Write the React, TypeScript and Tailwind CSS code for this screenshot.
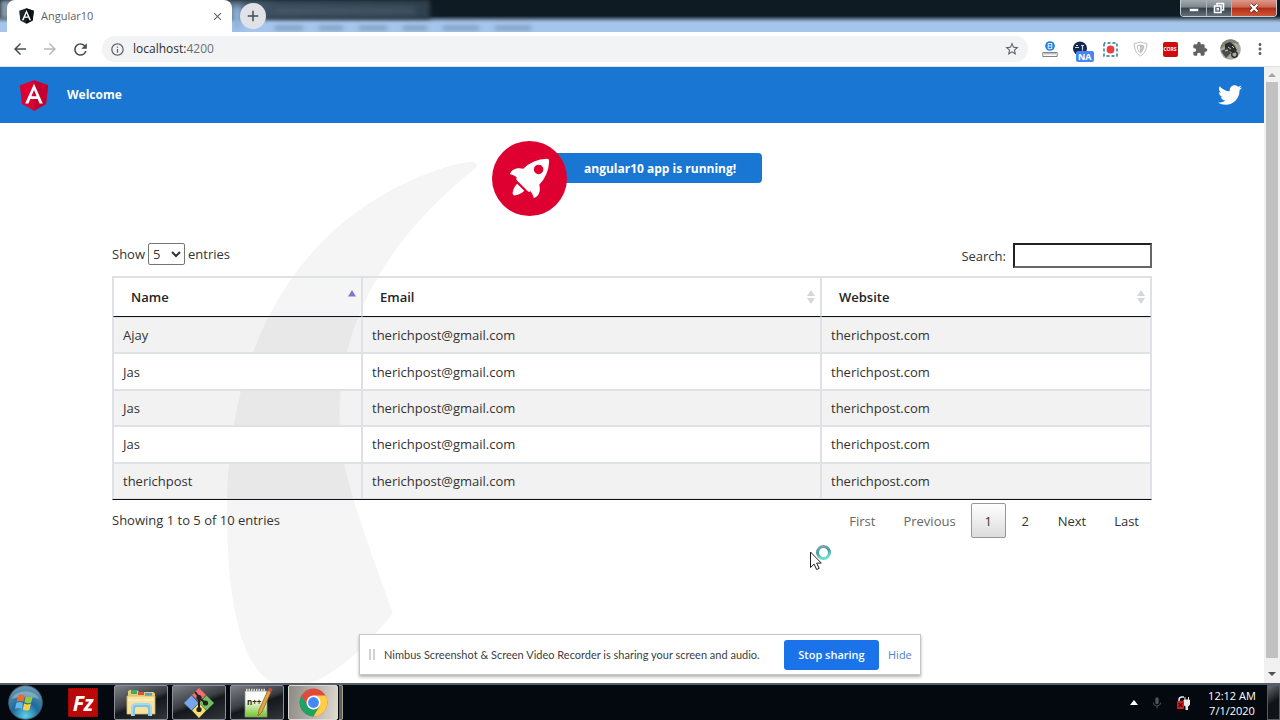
import React, { useState } from "react";
import { FaTwitter } from "react-icons/fa";
import {
  MdAdd,
  MdArrowBack,
  MdArrowForward,
  MdClose,
  MdExtension,
  MdInfoOutline,
  MdMic,
  MdMoreVert,
  MdRefresh,
  MdStarBorder,
} from "react-icons/md";

const rows = [
  { id: 1, name: "Ajay", email: "therichpost@gmail.com", website: "therichpost.com" },
  { id: 2, name: "Jas", email: "therichpost@gmail.com", website: "therichpost.com" },
  { id: 3, name: "Jas", email: "therichpost@gmail.com", website: "therichpost.com" },
  { id: 4, name: "Jas", email: "therichpost@gmail.com", website: "therichpost.com" },
  { id: 5, name: "therichpost", email: "therichpost@gmail.com", website: "therichpost.com" },
];

function AngularLogo({ className, dark }: { className: string; dark?: boolean }) {
  return (
    <svg viewBox="30 28 190 204" className={className} aria-hidden="true">
      <polygon fill={dark ? "#1a2429" : "#dd0031"} points="125,30 31.9,63.2 46.1,186.3 125,230 203.9,186.3 218.1,63.2" />
      <polygon fill={dark ? "#0a1013" : "#c3002f"} points="125,30 125,230 203.9,186.3 218.1,63.2" />
      <path
        fill="#fff"
        d="M125,52.1L66.8,182.6h21.7l11.7-29.2h49.4l11.7,29.2H183L125,52.1z M142,135.4H108l17-40.9L142,135.4z"
      />
    </svg>
  );
}

function TitleBar() {
  return (
    <div className="relative flex h-8 shrink-0 justify-between overflow-hidden bg-[linear-gradient(to_bottom,#0e1920_0,#101c25_16px,#8fabca_21px,#a5c5ea_23px,#a5c5ea_100%)]">
      {/* blurred window behind the glass frame */}
      <div className="absolute left-0 top-0 h-[19px] w-[430px] bg-[linear-gradient(to_right,#8499a8,#5d7184_50%,#384a59_65%,#2f404e)] blur-[2px]" />
      <div className="absolute left-[232px] top-[6px] h-[24px] w-[10px] bg-[#8fb5dd] blur-[3px]" />
      <div className="absolute left-[275px] top-[8px] h-[6px] w-[140px] bg-[#53677a]/60 blur-[3px]" />
      <div className="absolute left-[275px] top-[26px] flex gap-4 blur-[2px]">
        <div className="h-1 w-7 bg-[#7f9cbd]" />
        <div className="h-1 w-6 bg-[#7f9cbd]" />
        <div className="h-1 w-7 bg-[#7f9cbd]" />
        <div className="h-1 w-6 bg-[#7f9cbd]" />
        <div className="h-1 w-9 bg-[#7f9cbd]" />
        <div className="h-1 w-9 bg-[#7f9cbd]" />
      </div>

      <div className="relative flex items-center">
        <div className="ml-[7px] flex h-8 w-[225px] items-center rounded-t-lg bg-white pl-[12px] pr-[8px]">
          <AngularLogo dark className="h-[16px] w-[15px]" />
          <span className="ml-[7px] flex-1 text-[11px] leading-4 text-[#5f6368]">Angular10</span>
          <button aria-label="Close tab" className="text-[#5f6368]">
            <MdClose size={13} />
          </button>
        </div>
        <button aria-label="New tab" className="ml-[8px] grid size-[26px] place-items-center rounded-full bg-[#dfe3e7] text-[#45494d]">
          <MdAdd size={18} />
        </button>
      </div>

      <div className="relative mr-[3px] flex h-[17px] overflow-hidden rounded-b border border-t-0 border-[#c3ccd3] text-white">
        <button aria-label="Minimize" className="grid w-[26px] place-items-center border-r border-[#aab4bc] bg-[linear-gradient(to_bottom,#a3abb1,#7b858c_45%,#333e47_50%,#65717a)]">
          <svg width="12" height="12" viewBox="0 0 12 12">
            <rect x="1.5" y="6.5" width="9" height="3" fill="#fff" stroke="#4b555d" strokeWidth=".6" />
          </svg>
        </button>
        <button aria-label="Restore" className="grid w-[25px] place-items-center border-r border-[#aab4bc] bg-[linear-gradient(to_bottom,#a3abb1,#7b858c_45%,#333e47_50%,#65717a)]">
          <svg width="12" height="12" viewBox="0 0 12 12" fill="none" stroke="#fff" strokeWidth="1.6">
            <path d="M4 3V1.5h6.5V8H9" />
            <rect x="1.5" y="4" width="6.5" height="6.5" />
            <rect x="4" y="6.4" width="1.6" height="1.6" strokeWidth="1" />
          </svg>
        </button>
        <button aria-label="Close window" className="grid w-[44px] place-items-center bg-[linear-gradient(to_bottom,#dc9a8b,#cc6753_45%,#b02d14_50%,#cf5637)]">
          <svg width="12" height="12" viewBox="0 0 12 12">
            <path d="M2.5 2.5l7 7M9.5 2.5l-7 7" stroke="#5a2018" strokeWidth="3.6" />
            <path d="M2.5 2.5l7 7M9.5 2.5l-7 7" stroke="#fff" strokeWidth="2.3" />
          </svg>
        </button>
      </div>
    </div>
  );
}

function Extensions() {
  return (
    <div className="flex items-center text-[#5f6368]">
      <button aria-label="Ruler extension" className="grid w-[30px] place-items-center">
        <svg width="16" height="17" viewBox="0 0 16 17">
          <circle cx="8" cy="5" r="4.8" fill="#1f7fe0" />
          <path d="M6.200 2.500h3.600v5.200H6.200zM6.200 5h3.600" fill="none" stroke="#fff" strokeWidth=".9" />
          <path d="M.8 11.500v4h14.400v-4zM3 11.500v2M5 11.500v2M7 11.500v2M9 11.500v2M11 11.500v2M13 11.500v2" fill="none" stroke="#70767b" strokeWidth=".9" />
        </svg>
      </button>
      <button aria-label="Rank extension" className="relative grid w-[30px] place-items-center">
        <svg width="16" height="17" viewBox="0 0 16 17">
          <circle cx="8" cy="7.500" r="7" fill="#16294d" />
          <path d="M3 6.500h4M4 4.500h2M9 4.500h3M10.500 4.500v5" stroke="#c9d6ec" strokeWidth="1.200" />
        </svg>
        <span className="absolute left-[11px] top-[10px] rounded-[2px] bg-[#4688f1] px-[2px] text-[9px] font-bold leading-[11px] text-white">NA</span>
      </button>
      <button aria-label="Capture extension" className="grid w-[30px] place-items-center">
        <svg width="15" height="15" viewBox="0 0 15 15">
          <rect x="1" y="1" width="13" height="13" fill="none" stroke="#24708f" strokeWidth="1.400" strokeDasharray="3 2" strokeDashoffset="1.500" />
          <circle cx="7.500" cy="7.500" r="3.900" fill="#ee3b41" />
        </svg>
      </button>
      <button aria-label="Shield extension" className="grid w-[30px] place-items-center">
        <svg width="15" height="16" viewBox="0 0 15 16" fill="none" stroke="#b9bcbf">
          <path d="M7.500 1C5.400 2 3.200 2.300 1.200 2.300c0 5.400 1.500 9.700 6.300 12.700 4.800-3 6.300-7.300 6.300-12.700-2 0-4.200-.3-6.300-1.300z" />
          <path d="M7.500 4c-1.200.5-2.200.7-3.300.8.200 3 1.200 5.300 3.300 7.200z" fill="#fff" />
          <path d="M7.500 4c1.200.5 2.200.7 3.300.8-.2 3-1.200 5.300-3.300 7.200z" fill="#c5c8ca" />
        </svg>
      </button>
      <button aria-label="CORS extension" className="grid w-[30px] place-items-center">
        <span className="grid size-[15px] place-items-center overflow-hidden rounded-[2px] bg-[#d00b0b] text-[5px] font-bold leading-[15px] text-white">CORS</span>
      </button>
      <button aria-label="Extensions" className="grid w-[30px] place-items-center">
        <MdExtension size={16} />
      </button>
      <button aria-label="Profile" className="grid w-[30px] place-items-center">
        <svg width="21" height="21" viewBox="0 0 21 21">
          <defs>
            <clipPath id="avatar">
              <circle cx="10.500" cy="10.500" r="10.300" />
            </clipPath>
          </defs>
          <g clipPath="url(#avatar)">
            <rect width="21" height="21" fill="#a9a79b" />
            <path d="M0 0h21v6l-6-2-8 2-7 4z" fill="#7d8474" />
            <path d="M5 5l5-2 4 3 3 5-3 3-5-2-4 1z" fill="#2b2d2e" />
            <path d="M1 12l6-3 4 5-5 5z" fill="#4b4c4a" />
            <circle cx="14.500" cy="15.500" r="2.800" fill="none" stroke="#252727" strokeWidth="1.300" />
            <path d="M8 8l3 2M12 7l2 2M5 12l3-1" stroke="#c7c8c4" />
          </g>
        </svg>
      </button>
      <button aria-label="Menu" className="grid w-[30px] place-items-center">
        <MdMoreVert size={18} />
      </button>
    </div>
  );
}

function Toolbar() {
  return (
    <div className="flex h-[35px] shrink-0 items-center border-b border-[#dfe1e4] bg-white pl-[5px] pr-[5px] text-[#5f6368]">
      <button aria-label="Back" className="grid w-[30px] place-items-center text-[#4a4d51]">
        <MdArrowBack size={18} />
      </button>
      <button aria-label="Forward" className="grid w-[30px] place-items-center text-[#b6b8ba]">
        <MdArrowForward size={18} />
      </button>
      <button aria-label="Reload" className="grid w-[30px] place-items-center text-[#4a4d51]">
        <MdRefresh size={19} />
      </button>
      <div className="ml-[7px] mr-[7px] flex h-[26px] flex-1 items-center rounded-full bg-[#f1f3f4] px-[8px]">
        <MdInfoOutline size={15} />
        <span className="ml-[8px] flex-1 text-[12px] leading-4 text-[#6b6f73]">
          <span className="text-[#2b2d30]">localhost:</span>4200
        </span>
        <button aria-label="Bookmark this page">
          <MdStarBorder size={16} />
        </button>
      </div>
      <Extensions />
    </div>
  );
}

function RunningBadge() {
  return (
    <div className="relative mx-auto mt-[30px] h-[30px] w-[260px] rounded-[4px] bg-[#1976d2] pl-[82px] text-[12px] font-bold leading-8 text-white">
      <svg viewBox="0 0 101.678 101.678" className="absolute -left-[10px] -top-[12px] size-[75px]" aria-hidden="true">
        <circle cx="50.839" cy="50.839" r="50.839" fill="#dd0031" />
        <g transform="translate(24.185 24.185)" fill="#fff">
          <path
            d="M3.4,42.615a3.084,3.084,0,0,0,3.553,3.553,21.419,21.419,0,0,0,12.215-6.107L9.511,30.4A21.419,21.419,0,0,0,3.4,42.615Z"
            transform="translate(0.371 3.363)"
          />
          <path d="M53.3,3.221A3.09,3.09,0,0,0,50.081,0,48.227,48.227,0,0,0,18.322,13.437c-6-1.666-14.991-1.221-18.322,7.218A33.892,33.892,0,0,1,9.439,25.1l-.333.666a3.013,3.013,0,0,0,.555,3.553L23.985,43.641a2.9,2.9,0,0,0,3.553.555l.666-.333A33.892,33.892,0,0,1,32.647,53.3c8.55-3.664,8.884-12.326,7.218-18.322A48.227,48.227,0,0,0,53.3,3.221ZM34.424,9.772a6.439,6.439,0,1,1,9.106,9.106,6.368,6.368,0,0,1-9.106,0A6.467,6.467,0,0,1,34.424,9.772Z" />
        </g>
      </svg>
      angular10 app is running!
    </div>
  );
}

function SortIcon({ active }: { active?: boolean }) {
  return (
    <svg width="8" height="14" viewBox="0 0 8 14" aria-hidden="true">
      {active ? (
        <path d="M4 0l4 6.500H0z" fill="#7a7acb" />
      ) : (
        <path d="M4 0l4 6H0zM4 14l4-6H0z" fill="#d6d7da" />
      )}
    </svg>
  );
}

function HeaderCell({ label, active }: { label: string; active?: boolean }) {
  return (
    <th scope="col" className="h-[40px] border border-[#dee2e6] border-b-[#111111] pl-[17px] pr-[5px] text-left font-semibold text-[#212529]">
      <div className="flex items-center justify-between">
        {label}
        <SortIcon active={active} />
      </div>
    </th>
  );
}

function DataTable() {
  const [length, setLength] = useState("5");
  const [search, setSearch] = useState("");

  return (
    <div className="relative mx-[112px] mt-[60px] text-[13px] leading-5 text-[#333333]">
      <div className="flex items-start justify-between">
        <label className="flex items-center gap-[3px]">
          Show
          <select
            value={length}
            onChange={(e) => setLength(e.target.value)}
            className="h-[22px] w-[37px] rounded-[2px] border border-[#767676] bg-white text-[13px] leading-5"
          >
            <option>5</option>
            <option>10</option>
            <option>25</option>
          </select>
          entries
        </label>
        <label className="flex items-center gap-[7px]">
          Search:
          <input
            type="search"
            value={search}
            onChange={(e) => setSearch(e.target.value)}
            className="h-[25px] w-[139px] border-2 border-[#666666] border-l-[#222222] border-t-[#222222] bg-white px-1 outline-none"
          />
        </label>
      </div>

      <table className="mt-[8px] h-[224px] w-full table-fixed border-separate border-spacing-0 border border-[#dee2e6] border-b-[#111111]">
        <colgroup>
          <col className="w-[249px]" />
          <col className="w-[459px]" />
          <col />
        </colgroup>
        <thead>
          <tr>
            <HeaderCell label="Name" active />
            <HeaderCell label="Email" />
            <HeaderCell label="Website" />
          </tr>
        </thead>
        <tbody>
          {rows.map((row) => (
            <tr key={row.id} className="odd:bg-black/5 even:bg-white">
              <td className="border border-[#dee2e6] px-[9px]">{row.name}</td>
              <td className="border border-[#dee2e6] px-[9px]">{row.email}</td>
              <td className="border border-[#dee2e6] px-[9px]">{row.website}</td>
            </tr>
          ))}
        </tbody>
      </table>

      <div className="flex items-start justify-between">
        <p className="mt-[10px]">Showing 1 to 5 of 10 entries</p>
        <nav aria-label="Table pages" className="mt-[3px] flex gap-[2px]">
          <button disabled className="h-[35px] px-[13px] text-[#666666]">First</button>
          <button disabled className="h-[35px] px-[13px] text-[#666666]">Previous</button>
          <button className="h-[35px] w-[35px] rounded-[2px] border border-[#979797] bg-[linear-gradient(to_bottom,#ffffff,#dcdcdc)]">1</button>
          <button className="h-[35px] w-[35px]">2</button>
          <button className="h-[35px] px-[13px]">Next</button>
          <button className="h-[35px] px-[13px]">Last</button>
        </nav>
      </div>
    </div>
  );
}

function Scrollbar() {
  return (
    <div className="flex w-4 shrink-0 flex-col items-center bg-[#f1f1f1]">
      <svg width="16" height="15" viewBox="0 0 16 15">
        <path d="M8 6l4 4H4z" fill="#a3a3a3" />
      </svg>
      <div className="mb-[9px] w-3 flex-1 bg-[#c1c1c1]" />
      <svg width="16" height="16" viewBox="0 0 16 16">
        <path d="M8 9l4-4H4z" fill="#505050" />
      </svg>
    </div>
  );
}

function SharingBar() {
  return (
    <div className="absolute bottom-[8px] left-1/2 flex h-[41px] w-[562px] -translate-x-1/2 items-center border border-[#c4c6c8] bg-white pl-[9px] text-[11px] leading-4 text-[#3c4043] shadow-[0_2px_3px_rgba(0,0,0,0.3)]">
      <div className="h-[11px] w-[6px] border-x-2 border-[#d0d2d4]" />
      <span className="ml-[9px] w-[400px] whitespace-nowrap font-['Lato','Open_Sans',sans-serif]">
        Nimbus Screenshot &amp; Screen Video Recorder is sharing your screen and audio.
      </span>
      <button className="h-[30px] w-[95px] shrink-0 rounded-[3px] bg-[#1a73e8] font-semibold text-white">Stop sharing</button>
      <a href="#hide" className="ml-[9px] text-[#4a7fd0]">Hide</a>
    </div>
  );
}

function BusyCursor() {
  return (
    <svg width="26" height="30" viewBox="0 0 26 30" className="pointer-events-none absolute left-[808px] top-[476px]" aria-hidden="true">
      <defs>
        <linearGradient id="ring" x1="0" y1="0" x2="0.300" y2="1">
          <stop offset="0" stopColor="#8ba5b2" />
          <stop offset=".5" stopColor="#3f9c9b" />
          <stop offset="1" stopColor="#6fdcc4" />
        </linearGradient>
      </defs>
      <circle cx="15.500" cy="9.500" r="6" fill="#fff" stroke="url(#ring)" strokeWidth="3" />
      <path d="M2.500 9v15.500l3.600-3.400 2.500 5.400 2.600-1.200-2.500-5.200h4.600z" fill="#fff" stroke="#222" />
    </svg>
  );
}

function TaskButton({ label, active, children }: { label: string; active?: boolean; children: React.ReactNode }) {
  return (
    <button
      aria-label={label}
      className={
        active
          ? "grid h-[35px] w-[50px] place-items-center rounded-[2px] border border-[#dcd9d2] bg-[linear-gradient(100deg,#8d8984,#bcb8b2_60%,#e0dbcf)]"
          : "grid h-[35px] w-[54px] place-items-center rounded-[2px] border border-[#8b9096] bg-[linear-gradient(160deg,#7d8186,#3a3e43_45%,#14181d_55%,#32363b)]"
      }
    >
      {children}
    </button>
  );
}

function Taskbar() {
  return (
    <div className="flex h-[37px] shrink-0 items-center border-t-2 border-[#566069] bg-[#04090f] text-white">
      <button aria-label="Start" className="grid w-[50px] place-items-center">
        <svg width="35" height="35" viewBox="0 0 35 35">
          <defs>
            <radialGradient id="orb" cx=".5" cy=".9" r=".9">
              <stop offset="0" stopColor="#5fd0ee" />
              <stop offset=".45" stopColor="#1c6a9c" />
              <stop offset="1" stopColor="#6f9bb4" />
            </radialGradient>
          </defs>
          <circle cx="17.500" cy="17.500" r="16.800" fill="url(#orb)" stroke="#45606f" />
          <path d="M4 14C7 4 28 4 31 14c-8-3-19-3-27 0z" fill="#fff" opacity=".3" />
          <path d="M10 10.500c2.500-1.300 4.600-1.200 6.700.3l-1.400 6.200c-2.200-1.300-4.200-1.300-6.700-.2z" fill="#ee6a2e" />
          <path d="M17.800 11.300c2.300 1.300 4.400 1.300 7-.1l-1.600 6.200c-2.300 1.200-4.500 1.200-6.800-.1z" fill="#9bcb3c" />
          <path d="M8.400 17.800c2.500-1.200 4.500-1.100 6.700.2l-1.500 6.100c-2.100-1.300-4.200-1.300-6.700-.1z" fill="#62b7ee" />
          <path d="M16.200 18.500c2.300 1.200 4.500 1.200 6.800 0l-1.600 6.200c-2.400 1.200-4.600 1.100-6.700-.2z" fill="#fbd044" />
        </svg>
      </button>
      <button aria-label="FileZilla" className="grid w-[64px] place-items-center pl-[2px]">
        <span className="grid h-[29px] w-[30px] place-items-center border border-dotted border-[#7d0505] bg-[#bb0808] text-[21px] font-bold italic leading-[26px]">Fz</span>
      </button>
      <div className="flex gap-1">
        <TaskButton label="Explorer">
          <svg width="32" height="28" viewBox="0 0 32 28">
            <path d="M3 3c0-1 1-2 2-2h7l2 2h14c1 0 2 1 2 2v19H3z" fill="#e8cf76" />
            <path d="M6 1h6v4H6z" fill="#3faa64" />
            <path d="M13 3h6v3h-6z" fill="#d9503c" />
            <path d="M20 4h7v3h-7z" fill="#5c9bd2" />
            <path d="M2 7h28v18H2z" fill="#f6e3a0" stroke="#d6b85c" strokeWidth=".8" />
            <path d="M3 11h26" stroke="#fff6cf" />
            <path d="M8 27v-7c0-3 2-4 4-4h9c3 0 4 2 4 4v7" fill="none" stroke="#83c4e4" strokeWidth="4" />
            <path d="M7 27v-7c0-4 2-5 5-5h9c4 0 5 2 5 5v7" fill="none" stroke="#c8ebf8" />
          </svg>
        </TaskButton>
        <TaskButton label="Git">
          <svg width="32" height="32" viewBox="0 0 32 32">
            <path d="M16 1l7 7-7 7-7-7z" fill="#ed6f70" />
            <path d="M8.500 8.500l7 7.500-7 7.500L1 16z" fill="#78a6ed" />
            <path d="M23.500 8.500L31 16l-7.500 7.500L16 16z" fill="#72bf63" />
            <path d="M16 16l7 7.500-7 7.500-7-7.500z" fill="#f7df72" />
            <path d="M12 5l4 5v13M16 11l7 5" fill="none" stroke="#24211f" strokeWidth="2" />
            <circle cx="16" cy="10.500" r="2.600" fill="#24211f" />
            <circle cx="16" cy="22.500" r="2.600" fill="#24211f" />
            <circle cx="22.500" cy="16" r="2.600" fill="#24211f" />
          </svg>
        </TaskButton>
        <TaskButton label="Notepad++">
          <svg width="32" height="32" viewBox="0 0 32 32">
            <defs>
              <linearGradient id="note" x1="0" y1="0" x2="0" y2="1">
                <stop offset=".35" stopColor="#fbfdf8" />
                <stop offset="1" stopColor="#6fc524" />
              </linearGradient>
            </defs>
            <path d="M4 4h22v26H4z" fill="url(#note)" stroke="#8c8f8a" strokeWidth=".7" />
            <path d="M5 3h20" stroke="#d5d8d4" strokeWidth="2.500" strokeDasharray="1.500 1" />
            <text x="6" y="18" fontSize="8" fontWeight="700" fill="#1d2b15">n++</text>
            <path d="M27 3l3 2-9 20-4 4 1-6z" fill="#e0a442" stroke="#8a5a1d" strokeWidth=".7" />
            <path d="M27 3l1.500-2.500 3 2L30 5z" fill="#cf4a55" />
          </svg>
        </TaskButton>
        <div className="flex">
          <TaskButton label="Chrome" active>
            <svg width="29" height="29" viewBox="0 0 48 48">
              <circle cx="24" cy="24" r="23" fill="#de4b3c" />
              <path d="M4.100 12.500A23 23 0 0 0 24 47l10-17.500H14z" fill="#1da362" />
              <path d="M24 47A23 23 0 0 0 43.900 12.500H24l10 17.500z" fill="#ffcd46" />
              <circle cx="24" cy="24" r="11.500" fill="#fff" />
              <circle cx="24" cy="24" r="9" fill="#4587f3" />
            </svg>
          </TaskButton>
          <div className="ml-px h-[35px] w-1 rounded-r-[2px] border border-l-0 border-[#a5a19a] bg-[#625f5a]" />
        </div>
      </div>

      <div className="ml-auto flex h-full items-center">
        <button aria-label="Show hidden icons" className="grid w-[24px] place-items-center">
          <svg width="8" height="5" viewBox="0 0 8 5">
            <path d="M4 0l4 5H0z" fill="#fff" />
          </svg>
        </button>
        <MdMic size={14} className="mx-[4px] text-[#4d5257]" />
        <svg width="14" height="14" viewBox="0 0 14 14" className="ml-[8px] mr-[17px]" aria-hidden="true">
          <path d="M3 12V4c0-2 1-3 3-3h2" fill="none" stroke="#e9e9e9" strokeWidth="1.500" />
          <path d="M8 4h5.500v4c0 1.500-1 2-2 2v4H10v-4c-1 0-2-.5-2-2zM9 1v3M12.500 1v3" fill="#e9e9e9" stroke="#e9e9e9" />
          <rect x="1" y="5" width="7" height="8" rx="1" fill="#d81e1e" />
          <path d="M2.500 7l4 4M6.500 7l-4 4" stroke="#500" strokeWidth="1.200" />
        </svg>
        <div className="w-[50px] whitespace-nowrap text-center text-[11px] leading-[15px]">
          <div>12:12 AM</div>
          <div>7/1/2020</div>
        </div>
        <button aria-label="Show desktop" className="ml-[10px] h-full w-[13px] border border-[#565c62] bg-[linear-gradient(145deg,#666b70,#101419_50%)]" />
      </div>
    </div>
  );
}

export default function App() {
  return (
    <div className="flex h-screen min-h-[600px] flex-col overflow-hidden bg-white font-['Open_Sans','Noto_Sans',sans-serif]">
      <TitleBar />
      <Toolbar />
      <div className="relative flex min-h-0 flex-1">
        <main className="relative min-w-0 flex-1 overflow-hidden">
          <header className="flex h-[56px] items-center bg-[#1976d2] pl-[19px] pr-[22px] text-white">
            <AngularLogo className="h-[31px] w-[30px]" />
            <span className="ml-[18px] text-[12px] font-bold leading-8">Welcome</span>
            <a href="#twitter" aria-label="Twitter" className="ml-auto">
              <FaTwitter size={24} />
            </a>
          </header>
          <svg
            viewBox="0 0 516.119 1083.632"
            className="absolute left-[227px] top-[95px] h-[525px] w-[250px]"
            aria-hidden="true"
          >
            <path
              fill="#f5f5f5"
              d="M644.6,141S143.02,215.537,147.049,870.207s342.774,201.755,342.774,201.755S404.659,847.213,388.815,762.2c-27.116-145.51-11.551-384.124,271.9-609.1C671.15,139.365,644.6,141,644.6,141Z"
              transform="translate(-147.02 -140.939)"
            />
          </svg>
          <RunningBadge />
          <DataTable />
          <BusyCursor />
        </main>
        <Scrollbar />
        <SharingBar />
      </div>
      <Taskbar />
    </div>
  );
}
